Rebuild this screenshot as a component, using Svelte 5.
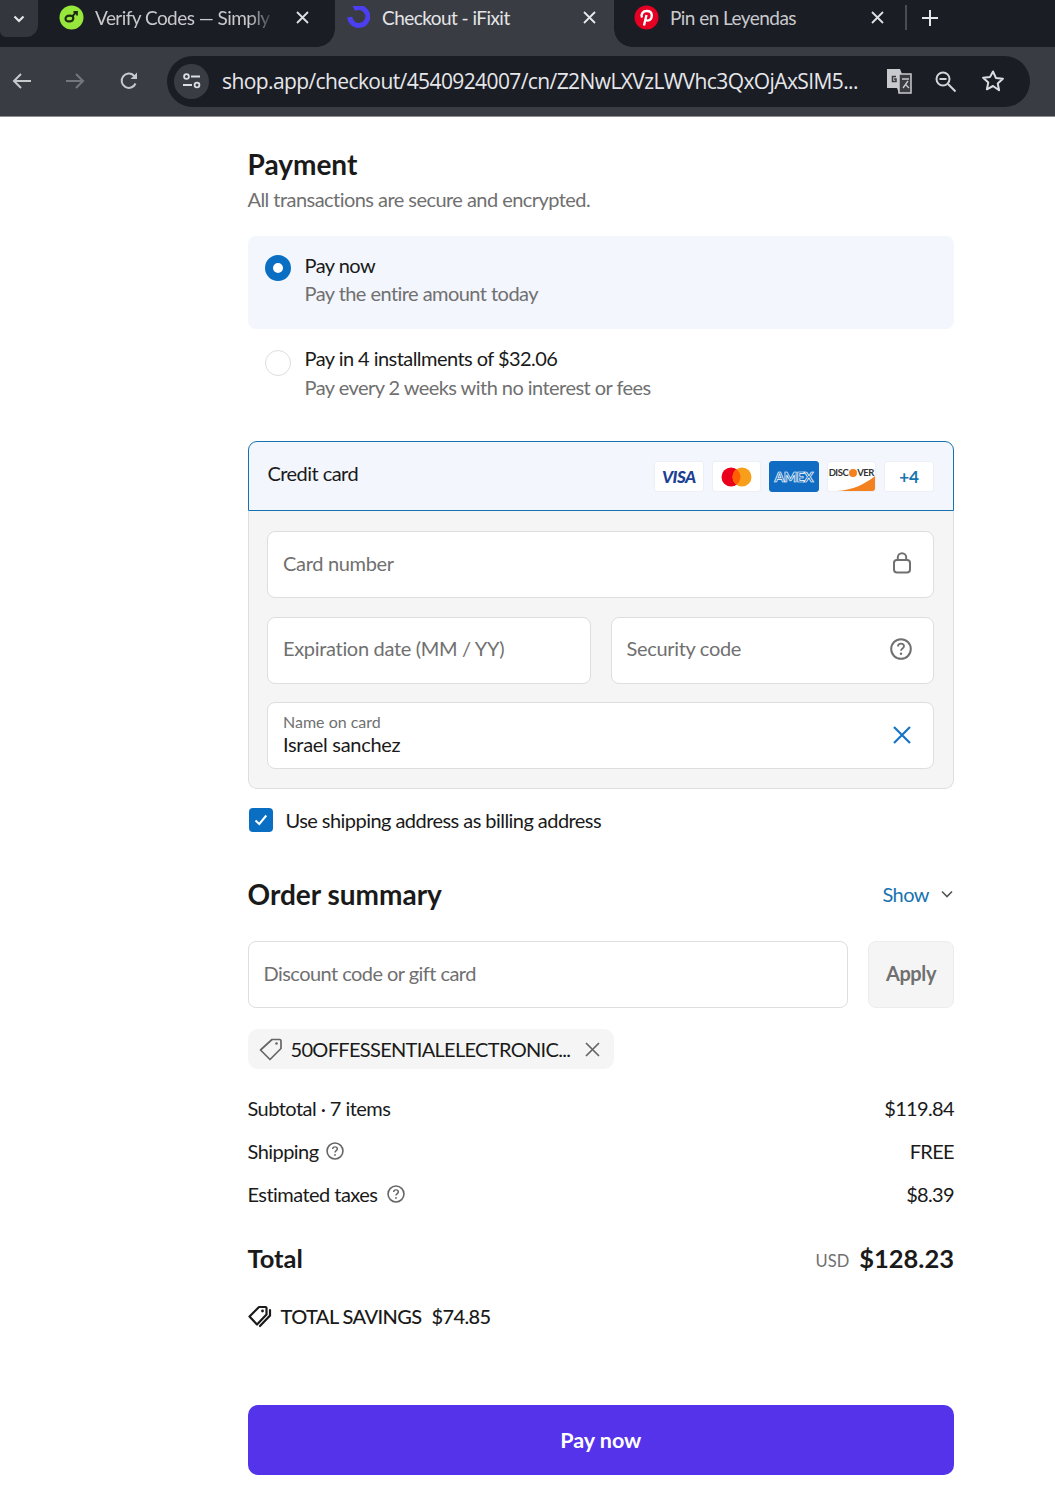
<script>
  const totals = [
    { label: 'Subtotal · 7 items', value: '$119.84', help: false },
    { label: 'Shipping', value: 'FREE', help: true },
    { label: 'Estimated taxes', value: '$8.39', help: true }
  ];
</script>

<div class="page">
  <header class="chrome">
    <div class="tabstrip">
      <div class="tablist-btn">
        <svg width="14" height="10" viewBox="0 0 14 10"><path d="M2.5 2.5 7 7l4.5-4.5" fill="none" stroke="#e6e7ea" stroke-width="2.2"/></svg>
      </div>
      <div class="tab tab1">
        <svg class="fav" width="25" height="25" viewBox="0 0 25 25"><circle cx="12.5" cy="12.5" r="12" fill="#96e63c"/><path d="M6.500 14c0-2.200 2-3.500 4.300-3.300l3 .5c1 2.200.3 4.500-1.800 5S6.500 16.500 6.500 14z" fill="none" stroke="#1e2a12" stroke-width="2.200"/><path d="M13 11.500l4.500-4.500m-3 0H18v3.500" fill="none" stroke="#1e2a12" stroke-width="1.800"/></svg>
        <span class="tab-title fade">Verify Codes — Simply</span>
        <svg class="close" width="13" height="13" viewBox="0 0 13 13"><path d="M1 1l11 11M12 1 1 12" stroke="#dfe0e3" stroke-width="1.800"/></svg>
      </div>
      <div class="tab active">
        <svg class="fav" width="23" height="23" viewBox="0 0 23 23"><path d="M7 2.800A9 9 0 1 1 2.800 11" fill="none" stroke="#4b3ff0" stroke-width="5"/></svg>
        <span class="tab-title">Checkout - iFixit</span>
        <svg class="close" width="13" height="13" viewBox="0 0 13 13"><path d="M1 1l11 11M12 1 1 12" stroke="#e8e9eb" stroke-width="1.800"/></svg>
      </div>
      <div class="tab tab3">
        <svg class="fav" width="25" height="25" viewBox="0 0 25 25"><circle cx="12.500" cy="12.500" r="12" fill="#e60023"/><path d="M10 20.500l2.500-10.500M8 12.500C6.500 9 9 6 12.800 6c3.200 0 5 2 5 4.600 0 3-1.800 5-4 5-1.200 0-2-.6-2.400-1.400" fill="none" stroke="#fff" stroke-width="2.400"/></svg>
        <span class="tab-title">Pin en Leyendas</span>
        <svg class="close" width="13" height="13" viewBox="0 0 13 13"><path d="M1 1l11 11M12 1 1 12" stroke="#dfe0e3" stroke-width="1.800"/></svg>
      </div>
      <span class="divider"></span>
      <svg class="plus" width="16" height="16" viewBox="0 0 16 16"><path d="M8 0v16M0 8h16" stroke="#e6e7ea" stroke-width="2"/></svg>
    </div>
    <div class="toolbar">
      <svg class="nav" width="20" height="20" viewBox="0 0 20 20"><path d="M19 10H2m7-7-7 7 7 7" fill="none" stroke="#c8c9cd" stroke-width="2"/></svg>
      <svg class="nav forward" width="20" height="20" viewBox="0 0 20 20"><path d="M1 10h17m-7-7 7 7-7 7" fill="none" stroke="#74767c" stroke-width="2"/></svg>
      <svg class="nav reload" width="20" height="20" viewBox="0 0 20 20"><path d="M16.500 12.500A7.200 7.200 0 1 1 15 4.700L17 7" fill="none" stroke="#c8c9cd" stroke-width="2"/><path d="M18 1.500V8h-6.500z" fill="#c8c9cd"/></svg>
      <div class="omnibox">
        <div class="site-btn">
          <svg width="20" height="16" viewBox="0 0 20 16"><circle cx="4.500" cy="3.500" r="2.400" fill="none" stroke="#dcdde0" stroke-width="1.800"/><path d="M9 3.500h9M1 12h9" stroke="#dcdde0" stroke-width="2"/><circle cx="15" cy="12" r="2.400" fill="none" stroke="#dcdde0" stroke-width="1.800"/></svg>
        </div>
        <span class="url">shop.app/checkout/4540924007/cn/Z2NwLXVzLWVhc3QxOjAxSIM5...</span>
        <svg class="omni-translate" width="26" height="26" viewBox="0 0 26 26"><path d="M1 1h13l2 5h9v19H13l-2-5H1z" fill="#c9cacd"/><path d="M13 6h12v19H13z" fill="#3a3c42" stroke="#c9cacd" stroke-width="1.500"/><path d="M10 8.500H6.500v5H10V11H8" fill="none" stroke="#3a3c42" stroke-width="1.600"/><path d="M16 11h7m-6 9 5-7m-3 3 4 4" fill="none" stroke="#c9cacd" stroke-width="1.400"/></svg>
        <svg class="omni-zoom" width="23" height="23" viewBox="0 0 23 23"><circle cx="9" cy="9" r="6.500" fill="none" stroke="#d4d5d8" stroke-width="2"/><path d="M5.500 9h7M14 14l7.500 7.500" stroke="#d4d5d8" stroke-width="2"/></svg>
        <svg class="omni-star" width="24" height="24" viewBox="0 0 24 24"><path d="M12 2.500l2.900 6.400 7 .8-5.200 4.700 1.400 6.900L12 17l-6.100 3.300 1.400-6.900-5.200-4.700 7-.8z" fill="none" stroke="#dcdde0" stroke-width="2" stroke-linejoin="round"/></svg>
      </div>
    </div>
  </header>

  <main class="content">
    <h2 class="payment-h">Payment</h2>
    <p class="secure">All transactions are secure and encrypted.</p>

    <div class="plan selected">
      <span class="radio on"></span>
      <div>
        <div class="plan-title">Pay now</div>
        <div class="plan-sub">Pay the entire amount today</div>
      </div>
    </div>
    <div class="plan second">
      <span class="radio"></span>
      <div>
        <div class="plan-title">Pay in 4 installments of $32.06</div>
        <div class="plan-sub">Pay every 2 weeks with no interest or fees</div>
      </div>
    </div>

    <section class="card-box">
      <div class="card-head">
        <span class="card-title">Credit card</span>
        <div class="brands">
          <span class="brand visa">VISA</span>
          <span class="brand">
            <svg width="31" height="20" viewBox="0 0 31 20"><circle cx="10" cy="10" r="9.500" fill="#eb001b"/><circle cx="21" cy="10" r="9.500" fill="#f79e1b"/><path d="M15.500 2.300a9.500 9.500 0 0 1 0 15.400 9.500 9.500 0 0 1 0-15.400z" fill="#ff5f00"/></svg>
          </span>
          <span class="brand amex">AMEX</span>
          <span class="brand discover">
            <svg class="disc-swoosh" width="40" height="15" viewBox="0 0 40 15"><path d="M40 0v13a2 2 0 0 1-2 2H2C18 14 30 8 40 0z" fill="#f48120"/></svg>
            <span class="disc-text">DISC<i></i>VER</span>
          </span>
          <span class="brand more">+4</span>
        </div>
      </div>
      <div class="card-body">
        <div class="field">
          <span class="ph">Card number</span>
          <svg class="lift" width="20" height="22" viewBox="0 0 20 22"><rect x="2" y="8" width="16" height="12.500" rx="3" fill="none" stroke="#707070" stroke-width="2"/><path d="M5.800 8V5.500a4.200 4.200 0 0 1 8.400 0V8" fill="none" stroke="#707070" stroke-width="2"/></svg>
        </div>
        <div class="split">
          <div class="field"><span class="ph">Expiration date (MM / YY)</span></div>
          <div class="field">
            <span class="ph">Security code</span>
            <svg class="lift-sm" width="22" height="22" viewBox="0 0 22 22"><circle cx="11" cy="11" r="9.800" fill="none" stroke="#707070" stroke-width="2"/><path d="M8 8.500c0-1.700 1.300-2.800 3-2.800s3 1 3 2.600c0 2.200-3 2.200-3 4.400" fill="none" stroke="#707070" stroke-width="1.800"/><circle cx="11" cy="15.800" r="1.200" fill="#707070"/></svg>
          </div>
        </div>
        <div class="field filled">
          <div class="name-block">
            <div class="float-label">Name on card</div>
            <div class="value">Israel sanchez</div>
          </div>
          <svg class="lift-sm" width="20" height="20" viewBox="0 0 20 20"><path d="M2 2l16 16M18 2 2 18" stroke="#1773c4" stroke-width="2.200"/></svg>
        </div>
      </div>
    </section>

    <div class="check-row">
      <span class="checkbox">
        <svg width="16" height="14" viewBox="0 0 16 14"><path d="M2.500 7.500 6.300 11l7-8.500" fill="none" stroke="#fff" stroke-width="2"/></svg>
      </span>
      <span>Use shipping address as billing address</span>
    </div>

    <div class="summary-head">
      <h2>Order summary</h2>
      <div class="show">
        <span>Show</span>
        <svg width="12" height="8" viewBox="0 0 12 8"><path d="M1 1.500l5 5 5-5" fill="none" stroke="#555" stroke-width="1.600"/></svg>
      </div>
    </div>

    <div class="discount">
      <div class="field disc-input"><span class="ph">Discount code or gift card</span></div>
      <div class="apply">Apply</div>
    </div>

    <div class="chip">
      <svg width="24" height="24" viewBox="0 0 24 24"><path d="M13 2.500h7.500A1.500 1.500 0 0 1 22 4v7.500L11 22.500 1.500 13z" fill="none" stroke="#666" stroke-width="1.700" stroke-linejoin="round"/><circle cx="17.500" cy="6.500" r="1.300" fill="#666"/></svg>
      <span class="chip-text">50OFFESSENTIALELECTRONIC...</span>
      <svg width="15" height="15" viewBox="0 0 15 15"><path d="M1 1l13 13M14 1 1 14" stroke="#666" stroke-width="1.700"/></svg>
    </div>

    <div class="rows">
      {#each totals as row}
        <div class="row">
          <span class="row-label">
            {row.label}
            {#if row.help}
              <svg width="18" height="18" viewBox="0 0 17 17"><circle cx="8.500" cy="8.500" r="7.500" fill="none" stroke="#666" stroke-width="1.500"/><path d="M6.300 6.700c0-1.300 1-2.100 2.200-2.100s2.200.8 2.200 2c0 1.600-2.200 1.600-2.200 3.300" fill="none" stroke="#666" stroke-width="1.400"/><circle cx="8.500" cy="12.200" r=".9" fill="#666"/></svg>
            {/if}
          </span>
          <span class="row-value">{row.value}</span>
        </div>
      {/each}
    </div>

    <div class="total">
      <span class="total-label">Total</span>
      <span class="total-val"><small>USD</small><strong>$128.23</strong></span>
    </div>

    <div class="savings">
      <svg width="24" height="24" viewBox="0 0 24 24"><path d="M11 3h6.500a1 1 0 0 1 1 1v6.500L9 20.500 1.500 12.500z" fill="none" stroke="#1a1a1a" stroke-width="2.200" stroke-linejoin="round"/><circle cx="14.500" cy="7" r="1.400" fill="#1a1a1a"/><path d="M22 6v5.500L12 22" fill="none" stroke="#1a1a1a" stroke-width="2.200" stroke-linecap="round"/></svg>
      <span>TOTAL SAVINGS</span>
      <span>$74.85</span>
    </div>

    <button class="pay">Pay now</button>
  </main>
</div>

<style>
  :global(body) { margin: 0; background: #fff; }
  .page {
    width: 1055px;
    height: 1500px;
    overflow: hidden;
    font-family: Lato, "Liberation Sans", sans-serif;
    color: #1a1a1a;
    background: #fff;
    letter-spacing: -0.55px;
  }
  .chrome { color: #dfe0e3; }
  .tabstrip {
    height: 47px;
    background: #1b1d25;
    display: flex;
    align-items: flex-start;
    position: relative;
  }
  .tablist-btn {
    width: 38px;
    height: 37px;
    background: #34363d;
    border-radius: 0 0 12px 6px;
    display: flex;
    align-items: center;
    justify-content: center;
  }
  .tab {
    height: 35px;
    display: flex;
    align-items: center;
    font-size: 19px;
    flex: none;
    color: #c8c9cd;
  }
  .tab1 { width: 297px; padding-left: 21px; box-sizing: border-box; }
  .tab1 .tab-title { width: 181px; margin-left: 11px; }
  .tab1 .close { margin-left: 20px; }
  .tab.active {
    width: 279px;
    height: 47px;
    background: #3a3c44;
    padding: 0 0 12px 12px;
    box-sizing: border-box;
    color: #e4e5e7;
    position: relative;
  }
  .tab.active::before, .tab.active::after {
    content: "";
    position: absolute;
    bottom: 0;
    width: 18px;
    height: 18px;
  }
  .tab.active::before {
    left: -18px;
    background: radial-gradient(circle at 0 0, #1b1d25 17.500px, #3a3c44 18px);
  }
  .tab.active::after {
    right: -18px;
    background: radial-gradient(circle at 100% 0, #1b1d25 17.500px, #3a3c44 18px);
  }
  .tab.active .tab-title { width: 201px; margin-left: 12px; }
  .tab.active .close { margin-left: 0; }
  .tab3 { width: 297px; padding-left: 20px; box-sizing: border-box; }
  .tab3 .tab-title { width: 200px; margin-left: 11px; }
  .tab3 .close { margin-left: 1px; }
  .tab-title { white-space: nowrap; overflow: hidden; flex: none; }
  .fade {
    -webkit-mask-image: linear-gradient(to right, #000 85%, transparent 100%);
    mask-image: linear-gradient(to right, #000 85%, transparent 100%);
  }
  .close { flex: none; }
  .divider {
    width: 2px;
    height: 25px;
    margin: 5px 0 0 -6px;
    background: #4a4c52;
  }
  .plus { margin: 10px 0 0 15px; }

  .toolbar {
    height: 70px;
    background: #3a3c44;
    display: flex;
    align-items: center;
    border-bottom: 1px solid #8c8d90;
    box-sizing: border-box;
    padding-bottom: 1px;
  }
  .nav { flex: none; margin-left: 12px; }
  .forward { margin-left: 33px; }
  .reload { margin-left: 34px; }
  .omnibox {
    flex: none;
    width: 863px;
    height: 51px;
    margin-left: 28px;
    background: #1b1d25;
    border-radius: 26px;
    display: flex;
    align-items: center;
    padding-left: 7px;
    box-sizing: border-box;
  }
  .site-btn {
    width: 35px;
    height: 35px;
    border-radius: 50%;
    background: #3a3c44;
    display: flex;
    align-items: center;
    justify-content: center;
    flex: none;
  }
  .url {
    margin-left: 13px;
    width: 651px;
    font-size: 21px;
    white-space: nowrap;
    color: #e6e7ea;
    flex: none;
    font-family: "Open Sans", Lato, sans-serif;
    letter-spacing: -0.6px;
  }
  .omni-translate { margin-left: 13px; flex: none; }
  .omni-zoom { margin-left: 22px; flex: none; }
  .omni-star { margin-left: 24px; flex: none; }

  .content {
    width: 706.500px;
    margin-left: 247.500px;
  }
  h2 { margin: 0; font-weight: 700; letter-spacing: 0; }
  .payment-h {
    font-size: 28px;
    line-height: 34px;
    margin-top: 30px;
  }
  .secure {
    margin: 4px 0 0;
    font-size: 20px;
    line-height: 28px;
    color: #707070;
  }
  .plan {
    height: 93px;
    display: flex;
    align-items: flex-start;
    box-sizing: border-box;
    padding: 15px 17px;
    gap: 14px;
    border-radius: 8px;
  }
  .plan.selected {
    background: #f3f6fd;
    margin-top: 23px;
  }
  .radio {
    width: 26px;
    height: 26px;
    box-sizing: border-box;
    border-radius: 50%;
    border: 1.500px solid #dedede;
    background: #fff;
    margin-top: 4px;
    flex: none;
  }
  .second .radio { margin-top: 6px; }
  .radio.on {
    border: 8px solid #0a6fc2;
  }
  .plan-title {
    font-size: 20px;
    line-height: 28px;
    color: #1a1a1a;
  }
  .plan-sub {
    font-size: 20px;
    line-height: 28px;
    color: #707070;
  }
  .second .plan-sub { margin-top: 1px; }
  .card-box { margin-top: 19px; }
  .card-head {
    height: 70px;
    box-sizing: border-box;
    background: #f3f6fd;
    border: 1.500px solid #1773b0;
    border-radius: 9px 9px 0 0;
    display: flex;
    align-items: center;
    justify-content: space-between;
    padding: 0 19px;
    font-size: 20px;
  }
  .card-title { margin-top: -7px; }
  .brands { display: flex; gap: 8px; margin-top: 1px; letter-spacing: 0; }
  .brand {
    width: 49.500px;
    height: 31px;
    box-sizing: border-box;
    background: #fff;
    border: 1px solid #eceff5;
    border-radius: 3px;
    display: flex;
    align-items: center;
    justify-content: center;
    position: relative;
    overflow: hidden;
  }
  .visa {
    color: #1c3f94;
    font-weight: 900;
    font-style: italic;
    font-size: 17px;
    letter-spacing: -0.6px;
  }
  .amex {
    background: #0f6cc2;
    border-color: #0f6cc2;
    color: #0f6cc2;
    -webkit-text-stroke: 0.7px #fff;
    font-size: 14px;
    font-weight: 900;
    letter-spacing: -0.5px;
  }
  .discover {
    align-items: flex-start;
    font-size: 9.500px;
    font-weight: 700;
    color: #333;
    letter-spacing: -0.5px;
  }
  .disc-text { margin-top: 5px; display: flex; align-items: center; position: relative; }
  .disc-text i {
    width: 8px;
    height: 8px;
    border-radius: 50%;
    background: #f48120;
    margin: 0 0.500px;
  }
  .disc-swoosh { position: absolute; right: 0; bottom: 0; }
  .more {
    width: 50px;
    color: #1773b0;
    font-size: 17px;
    font-weight: 700;
  }
  .card-body {
    background: #f5f5f5;
    border: 1.500px solid #dedede;
    border-top: 0;
    border-radius: 0 0 9px 9px;
    padding: 20px 19px 19px 18.500px;
    display: flex;
    flex-direction: column;
    gap: 18.500px;
  }
  .field {
    height: 67px;
    box-sizing: border-box;
    background: #fff;
    border: 1.500px solid #dedede;
    border-radius: 8px;
    display: flex;
    align-items: center;
    justify-content: space-between;
    padding: 0 21px 0 15px;
  }
  .ph { font-size: 20px; color: #707070; letter-spacing: -0.32px; margin-bottom: 4px; }
  .lift { margin-bottom: 4px; }
  .lift-sm { margin-bottom: 2px; }
  .name-block { margin-bottom: 3px; }
  .disc-input .ph { letter-spacing: -0.55px; }
  .split { display: grid; grid-template-columns: 1fr 1fr; gap: 20px; }
  .float-label { font-size: 16px; line-height: 20px; color: #707070; letter-spacing: 0; }
  .value { font-size: 20px; line-height: 24px; color: #1a1a1a; letter-spacing: -0.3px; }
  .check-row {
    display: flex;
    align-items: center;
    gap: 13px;
    margin: 18px 0 0 1px;
    font-size: 20px;
    line-height: 26px;
  }
  .checkbox {
    width: 24px;
    height: 24px;
    border-radius: 4px;
    background: #0a6fc2;
    display: flex;
    align-items: center;
    justify-content: center;
  }
  .summary-head {
    display: flex;
    justify-content: space-between;
    align-items: center;
    margin-top: 44px;
  }
  .summary-head h2 { font-size: 28px; line-height: 34px; }
  .show {
    display: flex;
    align-items: center;
    gap: 12px;
    color: #1773b0;
    font-size: 20px;
    padding-right: 1px;
  }
  .discount {
    display: grid;
    grid-template-columns: 1fr 86px;
    gap: 20px;
    margin-top: 30px;
  }
  .disc-input { height: 67px; }
  .apply {
    height: 67px;
    box-sizing: border-box;
    background: #f5f5f5;
    border: 1.500px solid #ececec;
    border-radius: 8px;
    display: flex;
    align-items: center;
    justify-content: center;
    font-size: 20px;
    font-weight: 700;
    color: #707070;
    letter-spacing: -0.4px;
    padding-bottom: 4px;
  }
  .chip {
    display: flex;
    align-items: center;
    height: 40px;
    width: 366px;
    box-sizing: border-box;
    margin-top: 21px;
    padding: 0 13px 0 11px;
    background: #f5f5f5;
    border-radius: 10px;
    font-size: 20px;
    gap: 8px;
  }
  .chip-text { width: 286px; flex: none; white-space: nowrap; letter-spacing: -0.68px; }
  .rows { margin-top: 25px; display: flex; flex-direction: column; gap: 15px; }
  .row {
    display: flex;
    justify-content: space-between;
    align-items: center;
    font-size: 20px;
    line-height: 28px;
  }
  .row-value { letter-spacing: -0.65px; }
  .row-label { display: flex; align-items: center; gap: 7px; }
  .row:nth-child(3) .row-label { gap: 10px; }
  .total {
    display: flex;
    justify-content: space-between;
    align-items: center;
    margin-top: 33px;
  }
  .total-label { font-size: 25.500px; line-height: 34px; font-weight: 700; letter-spacing: 0; }
  .total-val { display: flex; align-items: center; gap: 10px; letter-spacing: 0; }
  .total-val small { font-size: 16.500px; color: #707070; margin-top: 5px; }
  .total-val strong { font-size: 25.500px; font-weight: 700; }
  .savings {
    display: flex;
    align-items: center;
    margin-top: 27px;
    font-size: 20px;
    line-height: 28px;
    font-weight: 500;
    letter-spacing: -0.6px;
  }
  .savings svg { margin-right: 9px; }
  .savings span + span { margin-left: 10px; }
  .pay {
    display: block;
    width: 100%;
    height: 70px;
    margin-top: 75px;
    border: 0;
    border-radius: 10px;
    background: #5433eb;
    color: #fff;
    font-family: inherit;
    font-size: 21.500px;
    font-weight: 700;
    letter-spacing: 0;
  }
</style>
